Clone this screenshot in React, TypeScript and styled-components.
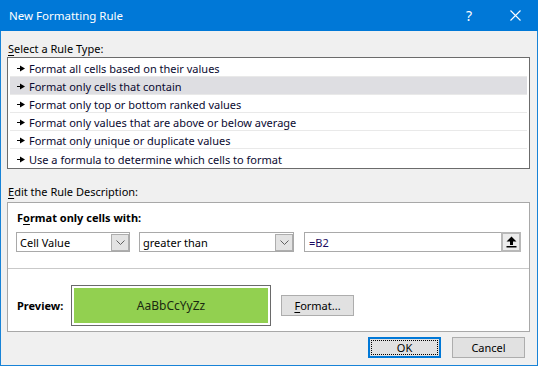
import React from 'react';
import styled, { createGlobalStyle } from 'styled-components';

const GlobalStyle = createGlobalStyle`
  html, body {
    margin: 0;
    padding: 0;
    background: #f0f0f0;
  }
  * {
    box-sizing: border-box;
  }
`;

const Window = styled.div`
  width: 538px;
  height: 366px;
  border: 1px solid #1883d7;
  border-top: none;
  background: #f0f0f0;
  display: flex;
  flex-direction: column;
  font-family: 'Segoe UI', 'Noto Sans', sans-serif;
  font-size: 11px;
  color: #000;
`;

const TitleBar = styled.div`
  height: 31px;
  margin: 0 -1px;
  background: #0078d7;
  color: #fff;
  display: flex;
  align-items: center;
  padding-left: 9px;
  font-size: 11.5px;
`;

const Title = styled.div`
  flex: 1;
`;

const CaptionButton = styled.div`
  width: 46px;
  height: 31px;
  display: flex;
  align-items: center;
  justify-content: center;
  font-size: 14px;
`;

const Body = styled.div`
  flex: 1;
  display: flex;
  flex-direction: column;
  padding: 0 6px 0 6px;
`;

const SectionLabel = styled.div<{ $top: number; $bottom: number }>`
  margin-top: ${(p) => p.$top}px;
  margin-bottom: ${(p) => p.$bottom}px;
  height: 16px;
  line-height: 16px;
  padding-left: 1px;
`;

const Key = styled.span`
  text-decoration: underline;
  text-underline-offset: 2px;
`;

const RuleList = styled.div`
  border: 1px solid #6b6b6b;
  background: #fff;
  padding: 1px 2px 1px;
  width: 523px;
`;

const RuleRow = styled.div<{ $selected?: boolean }>`
  height: 18px;
  display: flex;
  align-items: center;
  padding: 2px 0 0 7px;
  gap: 4px;
  border-bottom: 1px solid #e9e9e9;
  background: ${(p) => (p.$selected ? '#dedee2' : '#fff')};
  color: #0a0a30;
  &:last-child {
    border-bottom: none;
  }
`;

const DescBox = styled.div`
  width: 523px;
  height: 130px;
  border: 1px solid #a8a8a8;
  background: #fff;
  display: flex;
  flex-direction: column;
`;

const TopPane = styled.div`
  height: 66px;
  border-bottom: 1px solid #c9c9c9;
  padding: 7px 0 0 8px;
`;

const BoldLabel = styled.div`
  font-weight: 700;
  padding-left: 1px;
  height: 16px;
  line-height: 16px;
`;

const FieldRow = styled.div`
  margin-top: 6px;
  display: flex;
  gap: 9px;
`;

const Combo = styled.div<{ $width: number }>`
  width: ${(p) => p.$width}px;
  height: 20px;
  border: 1px solid #a9a9a9;
  display: flex;
  align-items: center;
  justify-content: space-between;
  padding: 1px 0 1px 3px;
`;

const DropButton = styled.div`
  width: 18px;
  height: 17px;
  border: 1px solid #adadad;
  background: #e3e3e3;
  display: flex;
  align-items: center;
  justify-content: center;
`;

const RefBox = styled.div`
  width: 217px;
  height: 20px;
  border: 1px solid #a9a9a9;
  display: flex;
  align-items: center;
  justify-content: space-between;
  padding-left: 4px;
  margin-left: 1px;
  color: #1a0a60;
`;

const CollapseButton = styled.div`
  width: 20px;
  height: 20px;
  margin: -1px -1px -1px 0;
  border: 2px solid #b8b8b8;
  background: #ececec;
  display: flex;
  align-items: center;
  justify-content: center;
`;

const BottomPane = styled.div`
  flex: 1;
  display: flex;
  align-items: center;
  padding: 11px 0 0 9px;
`;

const PreviewLabel = styled(BoldLabel)`
  width: 54px;
  padding-left: 0;
`;

const PreviewFrame = styled.div`
  width: 200px;
  height: 41px;
  border: 1px solid #6a6a6a;
  padding: 2px;
  background: #fff;
  margin-right: 10px;
`;

const PreviewFill = styled.div`
  height: 100%;
  background: #92d050;
  display: flex;
  align-items: center;
  justify-content: center;
  font-size: 12px;
  color: #1a2a10;
`;

const Button = styled.div<{ $default?: boolean }>`
  width: 73px;
  height: 21px;
  background: #e1e1e1;
  border: ${(p) => (p.$default ? '2px solid #0078d7' : '1px solid #adadad')};
  display: flex;
  align-items: center;
  justify-content: center;
  position: relative;
`;

const FocusRing = styled.div`
  position: absolute;
  inset: 1px;
  border: 1px dotted #000;
`;

const Footer = styled.div`
  display: flex;
  justify-content: flex-end;
  gap: 11px;
  padding: 5px 6px 0 0;
`;

const Pointer = () => (
  <svg width="8" height="7" viewBox="0 0 8 7">
    <rect x="0" y="3" width="4" height="1" fill="#000" />
    <polygon points="3,0.5 8,3.5 3,6.5" fill="#000" />
  </svg>
);

const Chevron = () => (
  <svg width="9" height="5" viewBox="0 0 9 5">
    <polyline points="0.5,0.5 4.5,4.5 8.5,0.5" fill="none" stroke="#606060" strokeWidth="1" />
  </svg>
);

const UpArrow = () => (
  <svg width="11" height="12" viewBox="0 0 11 12">
    <polygon points="5.5,0.5 10.5,5.5 7,5.5 7,9 4,9 4,5.5 0.5,5.5" fill="#000" />
    <rect x="0.5" y="10" width="10" height="1.5" fill="#000" />
  </svg>
);

const CloseGlyph = () => (
  <svg width="11" height="11" viewBox="0 0 11 11">
    <path d="M0.5 0.5 L10.5 10.5 M10.5 0.5 L0.5 10.5" stroke="#fff" strokeWidth="1.1" />
  </svg>
);

const rules = [
  'Format all cells based on their values',
  'Format only cells that contain',
  'Format only top or bottom ranked values',
  'Format only values that are above or below average',
  'Format only unique or duplicate values',
  'Use a formula to determine which cells to format',
];

export default function App() {
  return (
    <>
      <GlobalStyle />
      <Window>
        <TitleBar>
          <Title>New Formatting Rule</Title>
          <CaptionButton>?</CaptionButton>
          <CaptionButton>
            <CloseGlyph />
          </CaptionButton>
        </TitleBar>
        <Body>
          <SectionLabel $top={10} $bottom={0}>
            <Key>S</Key>elect a Rule Type:
          </SectionLabel>
          <RuleList>
            {rules.map((r, i) => (
              <RuleRow key={r} $selected={i === 1}>
                <Pointer />
                {r}
              </RuleRow>
            ))}
          </RuleList>
          <SectionLabel $top={15} $bottom={2}>
            <Key>E</Key>dit the Rule Description:
          </SectionLabel>
          <DescBox>
            <TopPane>
              <BoldLabel>
                F<Key>o</Key>rmat only cells with:
              </BoldLabel>
              <FieldRow>
                <Combo $width={114}>
                  Cell Value
                  <DropButton>
                    <Chevron />
                  </DropButton>
                </Combo>
                <Combo $width={155}>
                  greater than
                  <DropButton>
                    <Chevron />
                  </DropButton>
                </Combo>
                <RefBox>
                  =B2
                  <CollapseButton>
                    <UpArrow />
                  </CollapseButton>
                </RefBox>
              </FieldRow>
            </TopPane>
            <BottomPane>
              <PreviewLabel>Preview:</PreviewLabel>
              <PreviewFrame>
                <PreviewFill>AaBbCcYyZz</PreviewFill>
              </PreviewFrame>
              <Button>
                <span>
                  <Key>F</Key>ormat...
                </span>
              </Button>
            </BottomPane>
          </DescBox>
          <Footer>
            <Button $default>
              <FocusRing />
              OK
            </Button>
            <Button>Cancel</Button>
          </Footer>
        </Body>
      </Window>
    </>
  );
}
